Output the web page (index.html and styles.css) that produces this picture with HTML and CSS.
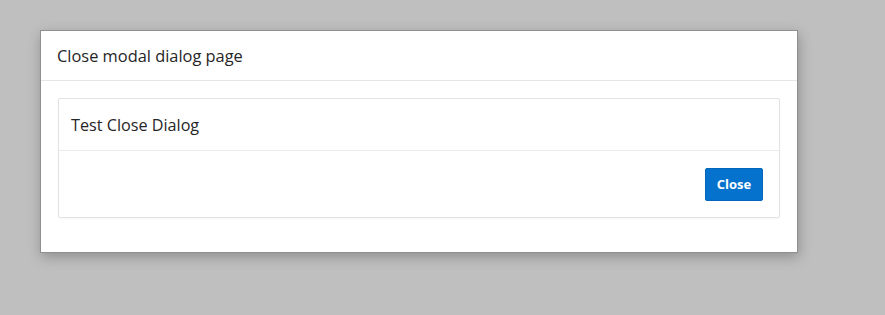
FILE: index.html
```html
<!DOCTYPE html>
<html>
<head>
<meta charset="utf-8">
<link rel="stylesheet" href="styles.css">
</head>
<body>
<div class="backdrop">
  <div class="dialog">
    <div class="dialog-header">Close modal dialog page</div>
    <div class="dialog-body">
      <div class="card">
        <div class="card-header">Test Close Dialog</div>
        <div class="card-footer">
          <button class="btn">Close</button>
        </div>
      </div>
    </div>
  </div>
</div>
</body>
</html>
```
FILE: styles.css
```css
html, body {
  margin: 0;
  padding: 0;
  height: 100%;
}
body {
  background: #bfbfbf;
  font-family: "Open Sans", "Noto Sans", sans-serif;
  color: #262626;
}
.backdrop {
  padding: 30px 0 0 40px;
}
.dialog {
  width: 756px;
  height: 221px;
  background: #fff;
  border: 1px solid #8f8f8f;
  box-shadow: 1px 4px 12px rgba(0,0,0,0.25);
  display: flex;
  flex-direction: column;
}
.dialog-header {
  height: 49px;
  border-bottom: 1px solid #e6e6e6;
  display: flex;
  align-items: center;
  padding-left: 16px;
  font-size: 16.4px;
}
.dialog-body {
  padding: 17px 17px 0 17px;
}
.card {
  border: 1px solid #e3e3e3;
  border-radius: 2px;
  box-shadow: 0 1px 2px rgba(0,0,0,0.04);
}
.card-header {
  height: 51px;
  border-bottom: 1px solid #ebebeb;
  display: flex;
  align-items: center;
  padding-left: 12px;
  font-size: 16.2px;
}
.card-footer {
  height: 66px;
  display: flex;
  justify-content: flex-end;
  align-items: center;
  padding-right: 16px;
}
.btn {
  width: 58px;
  height: 33px;
  background: #0572ce;
  color: #fff;
  border: 1px solid #0466bb;
  border-radius: 2px;
  font-family: "Open Sans", "Noto Sans", sans-serif;
  font-weight: 700;
  font-size: 13px;
  padding: 0;
}
```
